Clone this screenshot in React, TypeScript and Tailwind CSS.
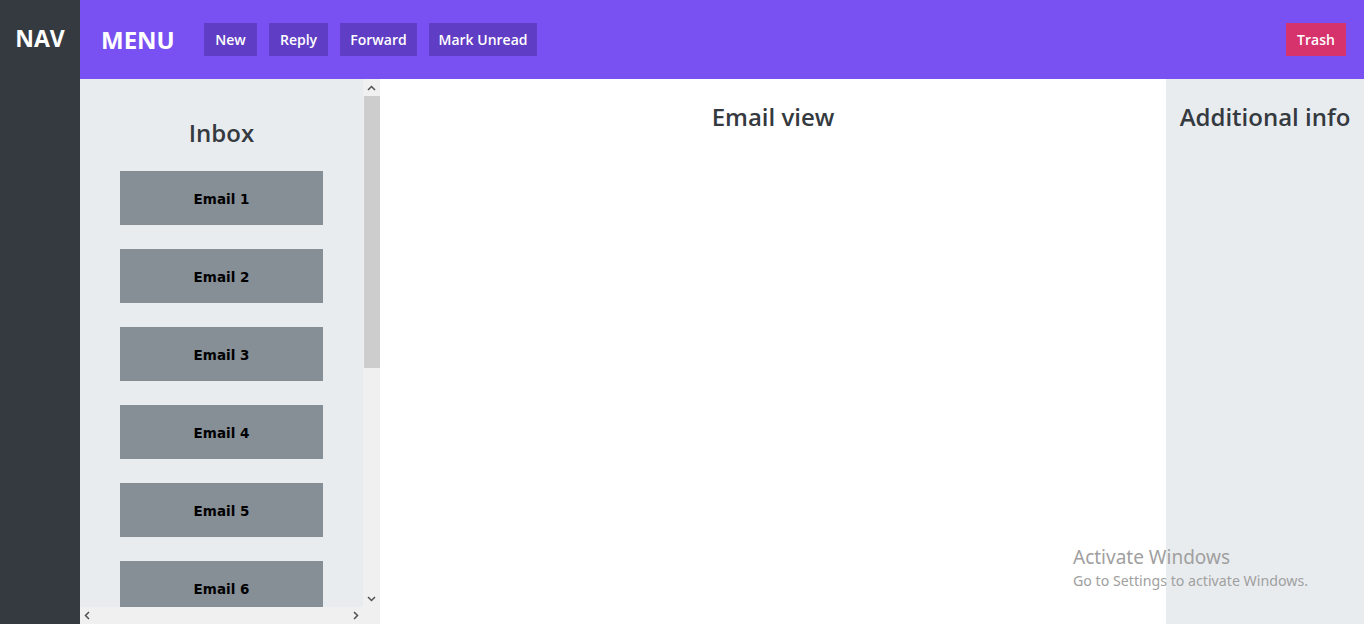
const actions = [
  { label: "New", w: "w-[53px]" },
  { label: "Reply", w: "w-[59px]" },
  { label: "Forward", w: "w-[77px]" },
  { label: "Mark Unread", w: "w-[108px]" },
];

const emails = [1, 2, 3, 4, 5, 6];

const App = () => {
  return (
    <div className="relative grid h-[624px] w-[1364px] grid-cols-[80px_300px_786px_198px] grid-rows-[79px_545px] overflow-hidden font-['Open_Sans',sans-serif]">
      <div className="row-span-2 bg-[#343a40] pt-[22px] text-center text-[23px] font-bold leading-8 text-white">
        NAV
      </div>

      <header className="col-span-3 flex items-center bg-[#7950f2] pl-[21px] pr-[18px]">
        <h1 className="mr-[31px] w-[72px] text-[24px] font-bold text-white">MENU</h1>
        <div className="flex gap-3">
          {actions.map((a) => (
            <button
              key={a.label}
              className={`${a.w} h-[33px] bg-[#5f3dc4] text-center text-sm font-semibold text-white`}
            >
              {a.label}
            </button>
          ))}
        </div>
        <button className="ml-auto h-[33px] w-[60px] bg-[#d6336c] text-sm font-semibold text-white">
          Trash
        </button>
      </header>

      <aside className="grid grid-cols-[283px_17px] grid-rows-[528px_17px] bg-[#e9ecef]">
        <div className="overflow-hidden">
          <h2 className="mt-[38px] mb-[22px] text-center text-2xl font-semibold text-[#343a40]">Inbox</h2>
          <div className="flex flex-col items-center gap-6">
            {emails.map((n) => (
              <div
                key={n}
                className="flex h-[54px] w-[203px] shrink-0 items-center justify-center bg-[#868e96] pt-0.5 font-['DejaVu_Sans',sans-serif] text-[13.5px] font-bold text-black"
              >
                Email {n}
              </div>
            ))}
          </div>
        </div>
        <div className="flex flex-col bg-[#f0f0f0]">
          <div className="flex h-[17px] items-center justify-center text-[#505050]">
            <svg width="9" height="6" viewBox="0 0 9 6">
              <path d="M1 5l3.5-3.5L8 5" fill="none" stroke="currentColor" strokeWidth="1.5" />
            </svg>
          </div>
          <div className="ml-px h-[272px] w-[16px] bg-[#cdcdcd]" />
          <div className="flex-1" />
          <div className="flex h-[17px] items-center justify-center text-[#505050]">
            <svg width="9" height="6" viewBox="0 0 9 6">
              <path d="M1 1l3.5 3.5L8 1" fill="none" stroke="currentColor" strokeWidth="1.5" />
            </svg>
          </div>
        </div>
        <div className="flex items-center justify-between bg-[#f0f0f0] px-[4px] text-[#505050]">
          <svg width="6" height="9" viewBox="0 0 6 9">
            <path d="M5 1L1.5 4.5 5 8" fill="none" stroke="currentColor" strokeWidth="1.5" />
          </svg>
          <svg width="6" height="9" viewBox="0 0 6 9">
            <path d="M1 1l3.5 3.5L1 8" fill="none" stroke="currentColor" strokeWidth="1.5" />
          </svg>
        </div>
        <div className="bg-[#f0f0f0]" />
      </aside>

      <main className="bg-white">
        <h2 className="pt-[22px] text-center text-2xl font-semibold text-[#343a40]">Email view</h2>
      </main>

      <section className="bg-[#e9ecef]">
        <h2 className="pt-[22px] text-center text-2xl font-semibold text-[#343a40]">Additional info</h2>
      </section>

      <div className="pointer-events-none absolute left-[1073px] top-[545px] font-['Noto_Sans',sans-serif] text-[#a0a0a0]">
        <div className="text-[19px] leading-6">Activate Windows</div>
        <div className="mt-[2px] text-[14.2px] leading-5">Go to Settings to activate Windows.</div>
      </div>
    </div>
  );
};

export default App;
